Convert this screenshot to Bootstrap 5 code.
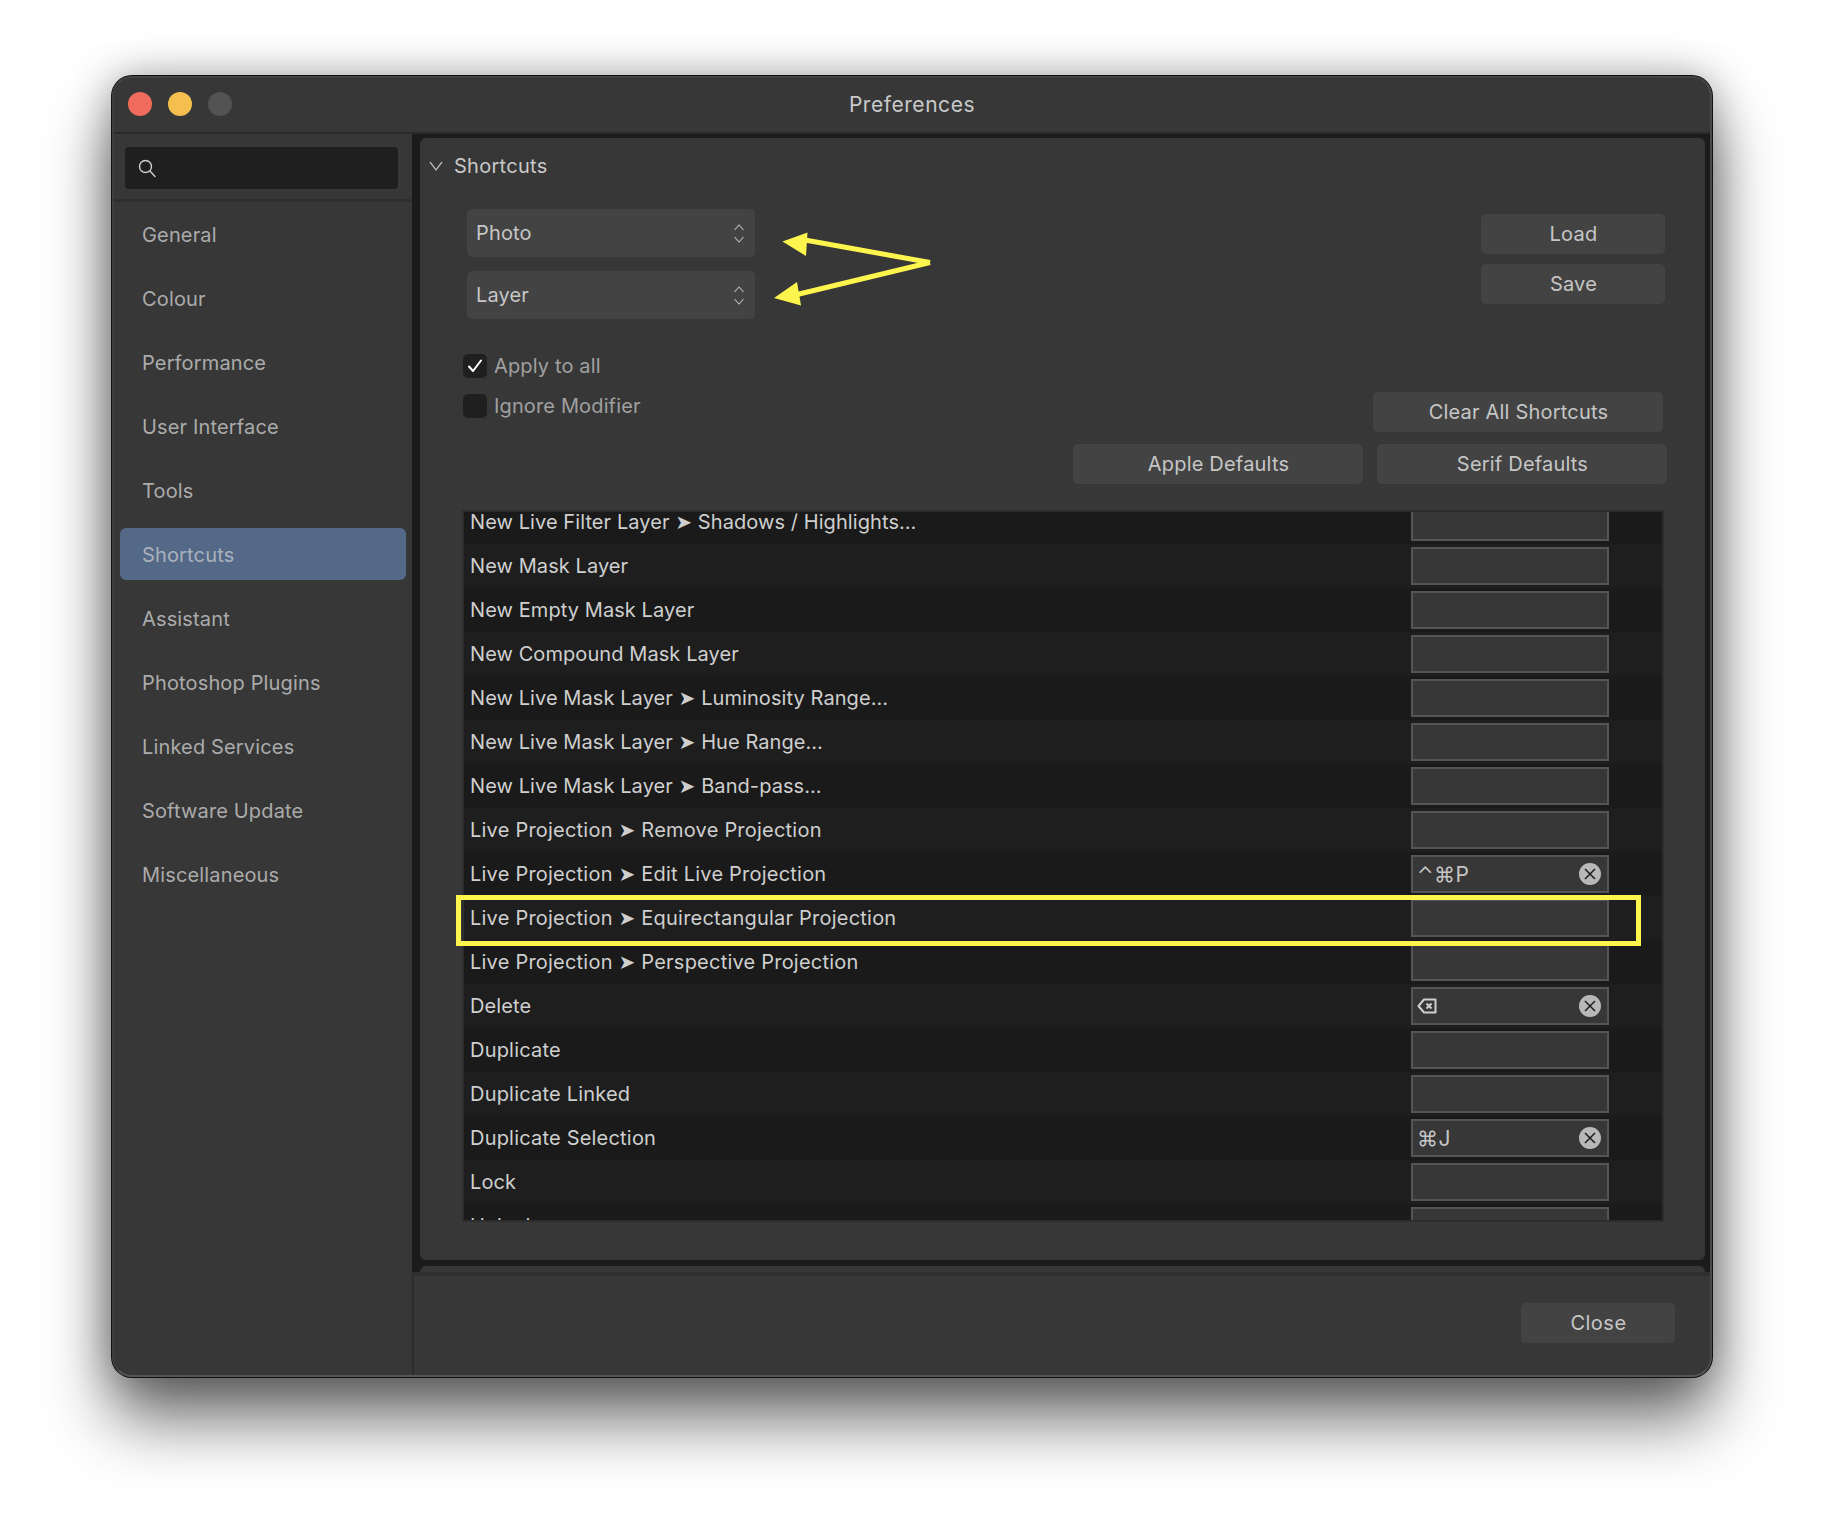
<!DOCTYPE html>
<html lang="en">
<head>
<meta charset="utf-8">
<title>Preferences</title>
<link href="https://cdn.jsdelivr.net/npm/bootstrap@5.3.0/dist/css/bootstrap.min.css" rel="stylesheet">
<style>
html,body{margin:0;height:100%;background:#fff;}
body{font-family:Inter,"DejaVu Sans",sans-serif;font-size:20px;overflow:hidden;}
.stage{position:relative;width:1824px;height:1524px;padding:76px 0 0 112px;}
.pwin{width:1600px;height:1301px;background:#373737;border-radius:20px;overflow:hidden;box-shadow:0 0 0 1px #111,0 42px 66px rgba(0,0,0,.58),0 0 42px rgba(0,0,0,.32);position:relative;}
.pwin::after{content:"";position:absolute;inset:0;border-radius:20px;border:2px solid #555;border-top-color:#444;border-left-color:#3e3e3e;border-right-color:#4a4a4a;pointer-events:none;}
.tbar{height:58px;background:#373737;border-bottom:2px solid #2a2a2a;position:relative;padding-left:16px;flex:none;}
.dot{width:24px;height:24px;border-radius:50%;}
.d-red{background:#f16b5f;}.d-yel{background:#f5bf4f;}.d-gry{background:#525252;}
.ttl{font-size:21px;color:#c9c9c9;letter-spacing:.55px;margin-top:1px;}
.bodyrow{height:1243px;}
.side{width:300px;background:#373737;flex:none;}
.searchzone{height:68px;padding:13px 14px 0 13px;border-bottom:3px solid #2e2e2e;}
.searchbox{height:42px;background:#1f1f1f;border-radius:4px;padding-left:12px;}
.side .nav{padding:6px 6px 0 8px;gap:12px;}
.side .nav-link{height:52px;line-height:54px;padding:0 0 0 22px;color:#ababab;font-size:20px;letter-spacing:.15px;border-radius:6px;}
.side .nav-link.active{background:#536987;color:#aab1bb;}
.rightcol{flex:1;background:#1b1b1b;min-width:0;display:flex;flex-direction:column;}
.panelmain{height:1122px;margin:4px 7px 0 8px;background:#373737;border-radius:6px;flex:none;}
.phead{height:71px;padding:13px 0 0 8px;color:#c9c9c9;font-size:20px;letter-spacing:.28px;gap:10px;}
.topblock{padding:0 38px 0 47px;height:275px;}
.selbox{width:288px;height:48px;background:#434343;border-radius:5px;color:#c6c6c6;padding:0 9px 0 9px;letter-spacing:.15px;}
.selbox + .selbox{margin-top:14px;}
.chk{margin-left:-4px;gap:7px;color:#a0a0a0;height:24px;letter-spacing:.14px;}
.chkbox{width:24px;height:24px;background:#1f1f1f;border-radius:5px;}
.chk1{margin-top:35px;}
.chk2{margin-top:16px;}
.ubtn{background:#434343;color:#c6c6c6;border:0;border-radius:5px;height:40px;padding:0 0 0 1px;font-size:20px;letter-spacing:.2px;line-height:40px;}
.ubtn:hover{background:#434343;color:#c6c6c6;}
.b-load{width:184px;margin:5px 2px 0 0;}
.b-save{width:184px;margin:10px 2px 0 0;}
.b-clear{width:290px;margin:88px 4px 0 0;}
.b-def{width:290px;}
.defrow{margin-top:12px;gap:14px;}
.listframe{margin-left:42px;width:1202px;height:712px;border:2px solid #2d2d2d;overflow:hidden;background:#1e1e1e;margin-top:26px;}
.listinner{margin-top:-12px;}
.srow{height:44px;padding-left:6px;color:#cfcfcf;font-size:20px;letter-spacing:.12px;background:#1a1a1a;}
.srow:nth-child(even){background:#1e1e1e;}
.slabel{flex:1;min-width:0;}
.tx-live{letter-spacing:.22px;}
.tx-new{letter-spacing:.08px;}
.tx-dup{letter-spacing:.2px;}
.scut{width:198px;height:38px;margin-right:53px;background:#373737;border:2px solid #555;flex:none;padding:0 3px 0 4px;color:#c6c6c6;font-size:21px;font-family:Inter,"DejaVu Sans",sans-serif;}
.scut .keys{line-height:1;letter-spacing:.5px;}
.xbtn{width:22px;height:22px;border-radius:50%;background:#b8b8b8;flex:none;margin-right:3px;}
.panelsub{height:6px;margin:6px 7px 0 8px;background:#373737;border-radius:6px 6px 0 0;flex:none;}
.foot{flex:1;background:#373737;border-top:4px solid #2f2f2f;border-left:2px solid #2c2c2c;position:relative;padding:27px 37px 0 0;}
.b-close{width:154px;letter-spacing:.5px;}
.hilite{position:absolute;left:456px;top:895px;width:1185px;height:51px;border:5px solid #fdf54d;pointer-events:none;}
.arrows{position:absolute;left:770px;top:225px;width:170px;height:90px;pointer-events:none;}
</style>
</head>
<body>
<div class="stage">
  <div class="pwin d-flex flex-column">
    <div class="tbar d-flex align-items-center">
      <div class="d-flex gap-3"><span class="dot d-red"></span><span class="dot d-yel"></span><span class="dot d-gry"></span></div>
      <span class="ttl position-absolute top-50 start-50 translate-middle">Preferences</span>
    </div>
    <div class="bodyrow d-flex">
      <aside class="side">
        <div class="searchzone">
          <div class="searchbox d-flex align-items-center">
            <svg width="20" height="20" viewBox="0 0 20 20" fill="none" stroke="#cfcfcf" stroke-width="1.4" stroke-linecap="round"><circle cx="8.5" cy="8.5" r="6"/><path d="M13 13l5 5.5"/></svg>
          </div>
        </div>
        <nav class="nav flex-column">
          <a class="nav-link" href="#">General</a>
          <a class="nav-link" href="#">Colour</a>
          <a class="nav-link" href="#">Performance</a>
          <a class="nav-link" href="#">User Interface</a>
          <a class="nav-link" href="#">Tools</a>
          <a class="nav-link active" href="#">Shortcuts</a>
          <a class="nav-link" href="#">Assistant</a>
          <a class="nav-link" href="#">Photoshop Plugins</a>
          <a class="nav-link" href="#">Linked Services</a>
          <a class="nav-link" href="#">Software Update</a>
          <a class="nav-link" href="#">Miscellaneous</a>
        </nav>
      </aside>
      <div class="rightcol">
        <section class="panelmain">
          <div class="phead d-flex align-items-start">
            <svg class="mt-2" width="16" height="14" viewBox="0 0 16 14" fill="none" stroke="#b5b5b5" stroke-width="1.3"><path d="M2 3l6 8 6-8"/></svg>
            <span>Shortcuts</span>
          </div>
          <div class="topblock d-flex justify-content-between">
            <div>
              <div class="selbox d-flex align-items-center justify-content-between">
                <span>Photo</span>
                <svg width="14" height="24" viewBox="0 0 14 24" fill="none" stroke="#bdbdbd" stroke-width="1.1"><path d="M2.500 9l4.500-5 4.500 5M2.500 16l4.500 5 4.500-5"/></svg>
              </div>
              <div class="selbox d-flex align-items-center justify-content-between">
                <span>Layer</span>
                <svg width="14" height="24" viewBox="0 0 14 24" fill="none" stroke="#bdbdbd" stroke-width="1.1"><path d="M2.500 9l4.500-5 4.500 5M2.500 16l4.500 5 4.500-5"/></svg>
              </div>
              <div class="chk chk1 d-flex align-items-center">
                <span class="chkbox d-flex align-items-center justify-content-center">
                  <svg width="16" height="14" viewBox="0 0 16 14" fill="none" stroke="#fff" stroke-width="2" stroke-linecap="round" stroke-linejoin="round"><path d="M2 7.500l4 4.500 8-10.500"/></svg>
                </span>
                <span>Apply to all</span>
              </div>
              <div class="chk chk2 d-flex align-items-center">
                <span class="chkbox"></span>
                <span>Ignore Modifier</span>
              </div>
            </div>
            <div class="d-flex flex-column align-items-end">
              <button class="btn ubtn b-load" type="button">Load</button>
              <button class="btn ubtn b-save" type="button">Save</button>
              <button class="btn ubtn b-clear" type="button">Clear All Shortcuts</button>
              <div class="d-flex defrow">
                <button class="btn ubtn b-def" type="button">Apple Defaults</button>
                <button class="btn ubtn b-def" type="button">Serif Defaults</button>
              </div>
            </div>
          </div>
          <div class="listframe">
            <div class="listinner">
              <div class="srow d-flex align-items-center"><span class="slabel tx-new">New Live Filter Layer ➤ Shadows / Highlights…</span><span class="scut"></span></div>
              <div class="srow d-flex align-items-center"><span class="slabel tx-new">New Mask Layer</span><span class="scut"></span></div>
              <div class="srow d-flex align-items-center"><span class="slabel tx-new">New Empty Mask Layer</span><span class="scut"></span></div>
              <div class="srow d-flex align-items-center"><span class="slabel tx-new">New Compound Mask Layer</span><span class="scut"></span></div>
              <div class="srow d-flex align-items-center"><span class="slabel tx-new">New Live Mask Layer ➤ Luminosity Range…</span><span class="scut"></span></div>
              <div class="srow d-flex align-items-center"><span class="slabel tx-new">New Live Mask Layer ➤ Hue Range…</span><span class="scut"></span></div>
              <div class="srow d-flex align-items-center"><span class="slabel tx-new">New Live Mask Layer ➤ Band-pass…</span><span class="scut"></span></div>
              <div class="srow d-flex align-items-center"><span class="slabel tx-live">Live Projection ➤ Remove Projection</span><span class="scut"></span></div>
              <div class="srow d-flex align-items-center"><span class="slabel tx-live">Live Projection ➤ Edit Live Projection</span>
                <span class="scut d-flex align-items-center justify-content-between"><span class="keys">⌃⌘P</span><span class="xbtn d-flex align-items-center justify-content-center"><svg width="12" height="12" viewBox="0 0 12 12" stroke="#1c1c1c" stroke-width="1.5"><path d="M1 1l10 10M11 1L1 11"/></svg></span></span></div>
              <div class="srow d-flex align-items-center"><span class="slabel tx-live">Live Projection ➤ Equirectangular Projection</span><span class="scut"></span></div>
              <div class="srow d-flex align-items-center"><span class="slabel tx-live">Live Projection ➤ Perspective Projection</span><span class="scut"></span></div>
              <div class="srow d-flex align-items-center"><span class="slabel">Delete</span>
                <span class="scut d-flex align-items-center justify-content-between"><svg width="20" height="16" viewBox="0 0 20 16" fill="none" stroke="#cfcfcf" stroke-width="2" stroke-linejoin="round"><path d="M7 1.500h11.500v13H7L1.500 8z"/><path d="M9.500 5.500l5 5M14.500 5.500l-5 5"/></svg><span class="xbtn d-flex align-items-center justify-content-center"><svg width="12" height="12" viewBox="0 0 12 12" stroke="#1c1c1c" stroke-width="1.5"><path d="M1 1l10 10M11 1L1 11"/></svg></span></span></div>
              <div class="srow d-flex align-items-center"><span class="slabel tx-dup">Duplicate</span><span class="scut"></span></div>
              <div class="srow d-flex align-items-center"><span class="slabel tx-dup">Duplicate Linked</span><span class="scut"></span></div>
              <div class="srow d-flex align-items-center"><span class="slabel tx-dup">Duplicate Selection</span>
                <span class="scut d-flex align-items-center justify-content-between"><span class="keys">⌘J</span><span class="xbtn d-flex align-items-center justify-content-center"><svg width="12" height="12" viewBox="0 0 12 12" stroke="#1c1c1c" stroke-width="1.5"><path d="M1 1l10 10M11 1L1 11"/></svg></span></span></div>
              <div class="srow d-flex align-items-center"><span class="slabel">Lock</span><span class="scut"></span></div>
              <div class="srow d-flex align-items-center"><span class="slabel">Unlock</span><span class="scut"></span></div>
            </div>
          </div>
        </section>
        <div class="panelsub"></div>
        <div class="foot d-flex justify-content-end align-items-start">
          <button class="btn ubtn b-close" type="button">Close</button>
        </div>
      </div>
    </div>
  </div>
  <svg class="arrows" viewBox="770 225 170 90" fill="#fdf54d" stroke="none">
    <path d="M930 262.500L805 240" stroke="#fdf54d" stroke-width="5" fill="none"/>
    <path d="M930 262.500L795 295" stroke="#fdf54d" stroke-width="5" fill="none"/>
    <path d="M782.500 241.500L807.500 232.500L806 256z"/>
    <path d="M774 298L797 282L801 305.500z"/>
  </svg>
  <div class="hilite"></div>
</div>
<script src="https://cdn.jsdelivr.net/npm/bootstrap@5.3.0/dist/js/bootstrap.bundle.min.js"></script>
</body>
</html>
